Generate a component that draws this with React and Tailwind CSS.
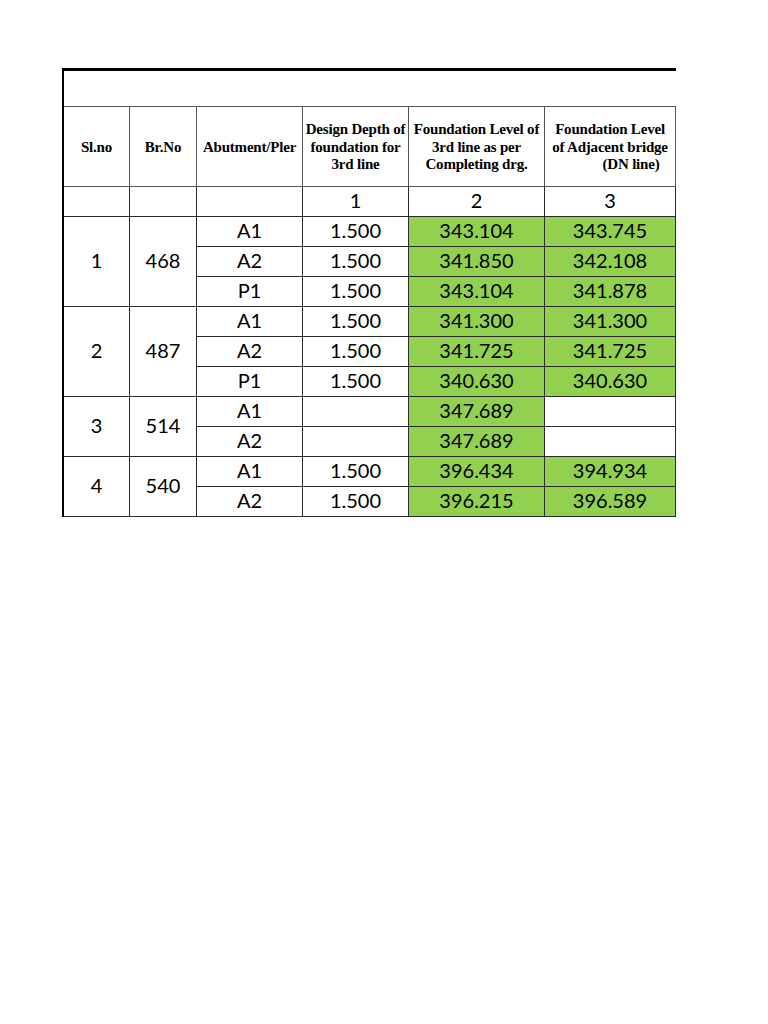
const groups = [
  {
    sl: "1",
    br: "468",
    rows: [
      { part: "A1", depth: "1.500", lvl: "343.104", adj: "343.745" },
      { part: "A2", depth: "1.500", lvl: "341.850", adj: "342.108" },
      { part: "P1", depth: "1.500", lvl: "343.104", adj: "341.878" },
    ],
  },
  {
    sl: "2",
    br: "487",
    rows: [
      { part: "A1", depth: "1.500", lvl: "341.300", adj: "341.300" },
      { part: "A2", depth: "1.500", lvl: "341.725", adj: "341.725" },
      { part: "P1", depth: "1.500", lvl: "340.630", adj: "340.630" },
    ],
  },
  {
    sl: "3",
    br: "514",
    rows: [
      { part: "A1", depth: "", lvl: "347.689", adj: "" },
      { part: "A2", depth: "", lvl: "347.689", adj: "" },
    ],
  },
  {
    sl: "4",
    br: "540",
    rows: [
      { part: "A1", depth: "1.500", lvl: "396.434", adj: "394.934" },
      { part: "A2", depth: "1.500", lvl: "396.215", adj: "396.589" },
    ],
  },
];

const span = { 2: "row-span-2", 3: "row-span-3" };

const Cell = ({ children, className = "" }) => (
  <div
    className={`flex items-center justify-center border-r border-b border-[#2a2a2a] h-[30px] pb-[4px] text-[20px] leading-none ${className}`}
  >
    {children}
  </div>
);

const Head = ({ children, className = "" }) => (
  <div
    className={`flex flex-col items-center justify-center border-r border-b border-[#555] pt-[2px] text-center font-bold text-[15px] leading-[17.5px] tracking-[-0.2px] font-['Liberation_Serif',serif] ${className}`}
  >
    {children}
  </div>
);

export default function App() {
  return (
    <div className="min-h-[1024px] bg-white pt-[68px] pl-[62px] text-black font-['Lato','Carlito',sans-serif]">
      <div className="grid w-[614px] grid-cols-[66px_67px_106px_106px_136px_131px] border-l-2 border-t-[3px] border-black">
        {/* title row */}
        <div className="col-span-6 h-[36px] border-b border-[#555]" />

        {/* header */}
        <Head className="h-[80px]">Sl.no</Head>
        <Head>Br.No</Head>
        <Head>Abutment/Pler</Head>
        <Head>
          <span>Design Depth of</span>
          <span>foundation for</span>
          <span>3rd line</span>
        </Head>
        <Head>
          <span>Foundation Level of</span>
          <span>3rd line as per</span>
          <span>Completing drg.</span>
        </Head>
        <Head>
          <span>Foundation Level</span>
          <span>of Adjacent bridge</span>
          <span className="pl-[42px]">(DN line)</span>
        </Head>

        {/* column numbers */}
        <Cell />
        <Cell />
        <Cell />
        <Cell>1</Cell>
        <Cell>2</Cell>
        <Cell>3</Cell>

        {groups.map((g) =>
          g.rows.map((r, i) => (
            <div key={g.sl + i} className="contents">
              {i === 0 && (
                <>
                  <Cell className={`!h-auto ${span[g.rows.length]}`}>{g.sl}</Cell>
                  <Cell className={`!h-auto ${span[g.rows.length]}`}>{g.br}</Cell>
                </>
              )}
              <Cell>{r.part}</Cell>
              <Cell>{r.depth}</Cell>
              <Cell className="bg-[#92d050]">{r.lvl}</Cell>
              <Cell className={r.adj ? "bg-[#92d050]" : ""}>{r.adj}</Cell>
            </div>
          ))
        )}
      </div>
    </div>
  );
}
